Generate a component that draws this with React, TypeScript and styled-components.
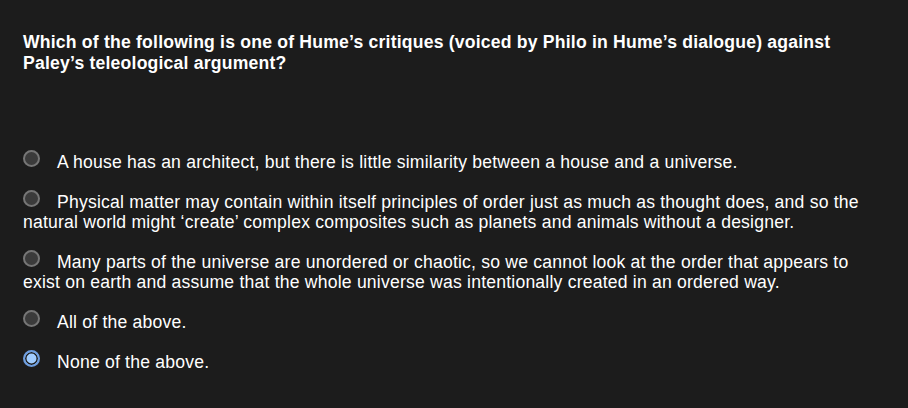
import React from "react";
import styled, { createGlobalStyle } from "styled-components";

const Global = createGlobalStyle`
  html, body { margin: 0; padding: 0; background: #1c1c1c; }
  body { font-family: "Liberation Sans", Arial, sans-serif; color: #ffffff; }
`;

const Page = styled.div`
  padding: 32px 38px 0 23px;
  width: 908px;
  height: 408px;
  box-sizing: border-box;
`;

const Question = styled.div`
  font-weight: bold;
  font-size: 17.6px;
  letter-spacing: 0.2px;
  line-height: 21px;
  margin: 0 0 76px 0;
`;

const Options = styled.div`
  display: flex;
  flex-direction: column;
  gap: 18px;
`;

const Option = styled.label`
  display: block;
  font-size: 17.6px;
  letter-spacing: 0.2px;
  line-height: 20px;
`;

const Radio = styled.span<{ $checked?: boolean }>`
  display: inline-block;
  box-sizing: border-box;
  width: 17px;
  height: 17px;
  border-radius: 50%;
  margin: 0 17px 1px 0;
  vertical-align: baseline;
  border: 2px solid ${(p) => (p.$checked ? "#6e9ee0" : "#767676")};
  background: ${(p) => (p.$checked ? "#a0ccff" : "#3b3b3b")};
  box-shadow: ${(p) => (p.$checked ? "inset 0 0 0 1.5px #1c1c1c" : "none")};
`;

const options = [
  { text: "A house has an architect, but there is little similarity between a house and a universe." },
  { text: "Physical matter may contain within itself principles of order just as much as thought does, and so the natural world might \u2018create\u2019 complex composites such as planets and animals without a designer." },
  { text: "Many parts of the universe are unordered or chaotic, so we cannot look at the order that appears to exist on earth and assume that the whole universe was intentionally created in an ordered way." },
  { text: "All of the above." },
  { text: "None of the above.", checked: true },
];

export default function App() {
  return (
    <Page>
      <Global />
      <Question>
        Which of the following is one of Hume’s critiques (voiced by Philo in Hume’s dialogue) against Paley’s teleological argument?
      </Question>
      <Options>
        {options.map((o, i) => (
          <Option key={i}>
            <Radio $checked={o.checked} />
            {o.text}
          </Option>
        ))}
      </Options>
    </Page>
  );
}
